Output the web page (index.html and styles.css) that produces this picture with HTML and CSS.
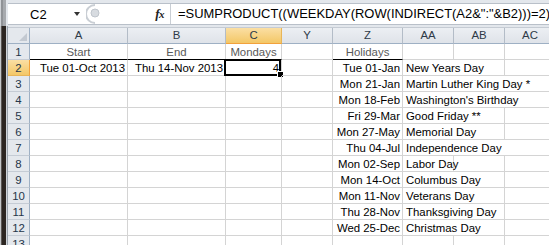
FILE: index.html
```html
<!DOCTYPE html>
<html>
<head>
<meta charset="utf-8">
<link rel="stylesheet" href="styles.css">
</head>
<body>
<div class="app">
  <div class="edge"><div class="edge-top"></div><div class="edge-bot"></div></div>
  <div class="main">
    <div class="fbar">
      <div class="fbox">
        <div class="namebox"><span class="cellref">C2</span><span class="arrow"></span></div>
        <div class="grip"><svg width="17" height="20" viewBox="0 0 17 20"><path d="M9 1 A9 9 0 0 0 9 19" fill="none" stroke="#c9ced4" stroke-width="2"/><circle cx="9" cy="9" r="4" fill="#d7dbe0" stroke="#bfc5cc" stroke-width="1"/></svg></div>
        <div class="fxzone"><span class="fx">f<span class="fxx">x</span></span></div>
        <div class="formula"><span class="ftext">=SUMPRODUCT((WEEKDAY(ROW(INDIRECT(A2&amp;":"&amp;B2)))=2)</span></div>
      </div>
    </div>
    <div class="sheet">
      <div class="corner"><span class="tri"></span></div>
      <div class="ch">A</div><div class="ch">B</div><div class="ch sel">C</div><div class="ch">Y</div><div class="ch">Z</div><div class="ch">AA</div><div class="ch">AB</div><div class="ch">AC</div>

      <div class="rh">1</div>
      <div class="c center label ul">Start</div><div class="c center label ul">End</div><div class="c center label ul">Mondays</div><div class="c"></div><div class="c center label ul">Holidays</div><div class="c"></div><div class="c"></div><div class="c"></div>

      <div class="rh sel">2</div>
      <div class="c right">Tue 01-Oct 2013</div><div class="c right">Thu 14-Nov 2013</div><div class="c right active">4<span class="selbox"></span><span class="handle"></span></div><div class="c"></div><div class="c right">Tue 01-Jan</div><div class="c left span2">New Years Day</div><div class="c"></div>

      <div class="rh">3</div>
      <div class="c"></div><div class="c"></div><div class="c"></div><div class="c"></div><div class="c right">Mon 21-Jan</div><div class="c left span3">Martin Luther King Day *</div>

      <div class="rh">4</div>
      <div class="c"></div><div class="c"></div><div class="c"></div><div class="c"></div><div class="c right">Mon 18-Feb</div><div class="c left span3">Washington's Birthday</div>

      <div class="rh">5</div>
      <div class="c"></div><div class="c"></div><div class="c"></div><div class="c"></div><div class="c right">Fri 29-Mar</div><div class="c left span2">Good Friday **</div><div class="c"></div>

      <div class="rh">6</div>
      <div class="c"></div><div class="c"></div><div class="c"></div><div class="c"></div><div class="c right">Mon 27-May</div><div class="c left span2">Memorial Day</div><div class="c"></div>

      <div class="rh">7</div>
      <div class="c"></div><div class="c"></div><div class="c"></div><div class="c"></div><div class="c right">Thu 04-Jul</div><div class="c left span3">Independence Day</div>

      <div class="rh">8</div>
      <div class="c"></div><div class="c"></div><div class="c"></div><div class="c"></div><div class="c right">Mon 02-Sep</div><div class="c left">Labor Day</div><div class="c"></div><div class="c"></div>

      <div class="rh">9</div>
      <div class="c"></div><div class="c"></div><div class="c"></div><div class="c"></div><div class="c right">Mon 14-Oct</div><div class="c left span2">Columbus Day</div><div class="c"></div>

      <div class="rh">10</div>
      <div class="c"></div><div class="c"></div><div class="c"></div><div class="c"></div><div class="c right">Mon 11-Nov</div><div class="c left span2">Veterans Day</div><div class="c"></div>

      <div class="rh">11</div>
      <div class="c"></div><div class="c"></div><div class="c"></div><div class="c"></div><div class="c right">Thu 28-Nov</div><div class="c left span2">Thanksgiving Day</div><div class="c"></div>

      <div class="rh">12</div>
      <div class="c"></div><div class="c"></div><div class="c"></div><div class="c"></div><div class="c right">Wed 25-Dec</div><div class="c left span2">Christmas Day</div><div class="c"></div>

      <div class="rh">13</div>
      <div class="c"></div><div class="c"></div><div class="c"></div><div class="c"></div><div class="c"></div><div class="c"></div><div class="c"></div><div class="c"></div>
    </div>
  </div>
</div>
</body>
</html>
```
FILE: styles.css
```css
html, body {
  margin: 0;
  padding: 0;
  width: 549px;
  height: 245px;
  overflow: hidden;
  background: #fff;
  font-family: "Liberation Sans", Arial, sans-serif;
}
.app {
  display: flex;
  height: 245px;
}
.edge {
  width: 8px;
  flex: none;
  display: flex;
  flex-direction: column;
}
.edge-top {
  height: 26px;
  flex: none;
  background: linear-gradient(to right, #d0d3d7 0, #d0d3d7 1px, #8f9296 1px, #8f9296 3px, #a7aaae 3px, #a7aaae 6px, #e3e7ec 6px);
}
.edge-bot {
  flex: 1;
  background: linear-gradient(to right, #c4c6c8 0, #c4c6c8 1px, #5a5654 1px, #5a5654 2px, #2c2622 2px, #2c2622 6px, #cfd4da 6px, #cfd4da 7px, #9aa3ad 7px);
}
.main {
  flex: 1;
  min-width: 0;
  display: flex;
  flex-direction: column;
  overflow: hidden;
}
.fbar {
  height: 28px;
  flex: none;
  box-sizing: border-box;
  padding: 3px 0 3px 0;
  background: #e3e7ec;
  border-bottom: 1px solid #c5cbd3;
}
.fbox {
  height: 22px;
  box-sizing: border-box;
  display: flex;
  background: #fff;
  border-top: 1px solid #b9c0c9;
  border-bottom: 1px solid #b9c0c9;
}
.namebox {
  width: 78px;
  flex: none;
  display: flex;
  align-items: center;
  position: relative;
}
.cellref {
  padding-left: 22px;
  font-size: 13px;
  color: #000;
}
.arrow {
  position: absolute;
  left: 66px;
  top: 8px;
  width: 0;
  height: 0;
  border-left: 3.5px solid transparent;
  border-right: 3.5px solid transparent;
  border-top: 4px solid #333;
}
.grip {
  width: 17px;
  flex: none;
  display: flex;
  align-items: center;
}
.fxzone {
  width: 68px;
  flex: none;
  display: flex;
  align-items: center;
  justify-content: flex-end;
  padding-right: 6px;
  box-sizing: border-box;
  border-right: 1px solid #c9ced4;
}
.fx {
  font-family: "Liberation Serif", serif;
  font-style: italic;
  font-weight: bold;
  font-size: 13px;
  color: #222;
  letter-spacing: -0.5px;
}
.fxx {
  font-size: 11px;
}
.formula {
  flex: 1;
  min-width: 0;
  white-space: nowrap;
  font-size: 12.7px;
  padding-left: 7px;
  display: flex;
  align-items: center;
  color: #000;
}
.ftext {
  display: inline-block;
  transform: scaleX(1.02);
  transform-origin: left center;
}
.sheet {
  display: grid;
  grid-template-columns: 22px 98px 98px 56px 51px 70px 51px 51px 51px;
  grid-auto-rows: 16px;
  font-size: 11.4px;
}
.corner {
  background: #e4e8ed;
  border-right: 1px solid #9eb0c4;
  border-bottom: 1px solid #9eb0c4;
  box-sizing: border-box;
  position: relative;
}
.tri {
  position: absolute;
  right: 2px;
  bottom: 2px;
  width: 0;
  height: 0;
  border-left: 8px solid transparent;
  border-bottom: 8px solid #c3c9d1;
}
.ch {
  background: linear-gradient(#eceff3, #dfe3e9);
  border-right: 1px solid #b3bcc7;
  border-bottom: 1px solid #9eb0c4;
  box-sizing: border-box;
  text-align: center;
  color: #2e3a48;
  line-height: 15px;
  font-size: 11.4px;
}
.ch.sel {
  background: linear-gradient(#fbdfa4, #f3c766);
  border-bottom: 1px solid #f2a13b;
  border-right: 1px solid #e8b558;
  color: #2e3a48;
}
.rh {
  background: #e4e8ed;
  border-right: 1px solid #9eb0c4;
  border-bottom: 1px solid #c5ccd5;
  box-sizing: border-box;
  text-align: center;
  color: #26364a;
  line-height: 16px;
  font-size: 11.4px;
}
.rh.sel {
  background: linear-gradient(#fbdfa4, #f3c766);
  border-right: 1px solid #f2a13b;
  border-bottom: 1px solid #e8b558;
}
.c {
  border-right: 1px solid #d4d4d4;
  border-bottom: 1px solid #d4d4d4;
  box-sizing: border-box;
  white-space: nowrap;
  line-height: 13px;
  padding-top: 2px;
  color: #000;
  position: relative;
}
.c.center { text-align: center; overflow: visible; }
.c.right { text-align: right; padding-right: 2px; }
.c.left { text-align: left; padding-left: 3px; }
.c.label { color: #595959; }
.c.ul { border-bottom: 1px solid #000; }
.span2 { grid-column: span 2; }
.span3 { grid-column: span 3; }
.active { padding-right: 3px; }
.selbox {
  position: absolute;
  left: -2px;
  top: -1px;
  width: 57px;
  height: 17px;
  border: 2px solid #000;
  box-sizing: border-box;
}
.handle {
  position: absolute;
  right: -3px;
  bottom: -3px;
  width: 5px;
  height: 5px;
  background: #000;
  border: 1px solid #fff;
  box-sizing: content-box;
}
```
